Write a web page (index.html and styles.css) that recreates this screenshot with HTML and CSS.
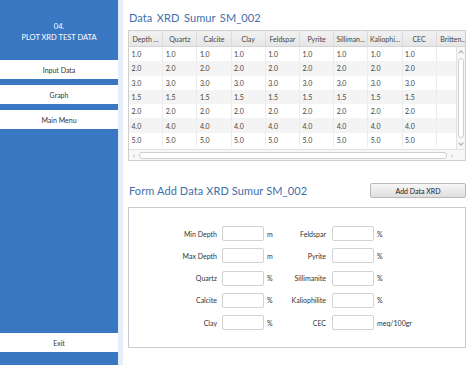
FILE: index.html
```html
<!DOCTYPE html>
<html>
<head>
<meta charset="utf-8">
<link rel="stylesheet" href="styles.css">
</head>
<body>
<div class="app">
  <aside class="sidebar">
    <div class="brand">
      <div>04.</div>
      <div>PLOT XRD TEST DATA</div>
    </div>
    <div class="navbtn">Input Data</div>
    <div class="navbtn">Graph</div>
    <div class="navbtn">Main Menu</div>
    <div class="spacer"></div>
    <div class="navbtn exit">Exit</div>
  </aside>
  <div class="strip"></div>
  <main class="main">
    <h1 class="title">Data XRD Sumur SM_002</h1>
    <div class="table">
      <div class="thead">
        <div class="th">Depth ...</div><div class="th">Quartz</div><div class="th">Calcite</div><div class="th">Clay</div><div class="th">Feldspar</div><div class="th">Pyrite</div><div class="th">Silliman...</div><div class="th">Kaliophi...</div><div class="th">CEC</div><div class="th">Britten...</div>
      </div>
      <div class="tbody">
        <div class="rows" id="rows"></div>
        <div class="vscroll"><span class="arr up"></span><span class="vthumb"></span><span class="arr down"></span></div>
      </div>
      <div class="hbar">
        <div class="hscroll"><span class="harr">&lsaquo;</span><span class="hthumb"></span><span class="harr">&rsaquo;</span></div>
        <div class="corner"></div>
      </div>
    </div>

    <div class="formhead">
      <h2 class="title">Form Add Data XRD Sumur SM_002</h2>
      <button class="addbtn">Add Data XRD</button>
    </div>
    <div class="panel">
      <div class="lbl">Min Depth</div><div class="inp"></div><div class="unit">m</div>
      <div class="lbl">Feldspar</div><div class="inp"></div><div class="unit">%</div>
      <div class="lbl">Max Depth</div><div class="inp"></div><div class="unit">m</div>
      <div class="lbl">Pyrite</div><div class="inp"></div><div class="unit">%</div>
      <div class="lbl">Quartz</div><div class="inp"></div><div class="unit">%</div>
      <div class="lbl">Sillimanite</div><div class="inp"></div><div class="unit">%</div>
      <div class="lbl">Calcite</div><div class="inp"></div><div class="unit">%</div>
      <div class="lbl">Kaliophilite</div><div class="inp"></div><div class="unit">%</div>
      <div class="lbl">Clay</div><div class="inp"></div><div class="unit">%</div>
      <div class="lbl">CEC</div><div class="inp"></div><div class="unit">meq/100gr</div>
    </div>
  </main>
</div>
<script src="app.js"></script>
</body>
</html>
```
FILE: app.js
```js
var vals = ["1.0","2.0","3.0","1.5","2.0","4.0","5.0"];
var rows = document.getElementById("rows");
vals.forEach(function (v, i) {
  var r = document.createElement("div");
  r.className = "tr" + (i % 2 ? " alt" : "");
  for (var c = 0; c < 10; c++) {
    var d = document.createElement("div");
    d.className = "td";
    d.textContent = c < 9 ? v : "";
    r.appendChild(d);
  }
  rows.appendChild(r);
});
```
FILE: styles.css
```css
* { box-sizing: border-box; }
body {
  margin: 0;
  font-family: Lato, "Open Sans", sans-serif;
  background: #fff;
  color: #333;
}
.app {
  display: flex;
  width: 474px;
  height: 365px;
  overflow: hidden;
}
.sidebar {
  width: 119px;
  background: #3a77c2;
  display: flex;
  flex-direction: column;
  padding-bottom: 13px;
}
.brand {
  height: 60px;
  display: flex;
  flex-direction: column;
  align-items: center;
  justify-content: center;
  color: #fff;
  font-size: 7.5px;
  line-height: 11px;
  padding-top: 3px;
}
.navbtn {
  height: 19px;
  background: #fff;
  color: #333;
  font-size: 7px;
  display: flex;
  align-items: center;
  justify-content: center;
  margin-bottom: 6px;
}
.spacer { flex: 1; }
.navbtn.exit { margin-bottom: 0; }
.strip {
  width: 5px;
  background: #e4edf8;
}
.main {
  flex: 1;
  padding: 0 8px 0 5px;
}
.title {
  margin: 0;
  font-weight: 400;
  font-size: 11px;
  color: #3d6fab;
  line-height: 16px;
  letter-spacing: 0.1px;
  white-space: pre;
}
.main > .title { padding-top: 10px; height: 30px; padding-left: 1px; word-spacing: 1.5px; }
.table {
  width: 338px;
  height: 131px;
  border: 1px solid #cfcfcf;
  display: flex;
  flex-direction: column;
  overflow: hidden;
}
.thead {
  display: flex;
  height: 16px;
  background: linear-gradient(#f2f2f2, #e6e6e6);
  border-bottom: 1px solid #d4d4d4;
  flex: none;
}
.th {
  flex: none;
  width: 34.2px;
  font-size: 7px;
  color: #444;
  display: flex;
  align-items: center;
  justify-content: center;
  border-right: 1px solid #dcdcdc;
  white-space: nowrap;
  overflow: hidden;
}
.tbody {
  flex: 1;
  display: flex;
  min-height: 0;
}
.rows { flex: 1; overflow: hidden; }
.tr { display: flex; height: 14.3px; background: #fff; overflow: hidden; }
.tr.alt { background: #f4f4f4; }
.td {
  flex: none;
  width: 34.2px;
  font-size: 7px;
  line-height: 8px;
  color: #444;
  padding-left: 2.5px;
  display: flex;
  align-items: center;
  border-right: 1px solid #ececec;
}
.vscroll {
  width: 9px;
  flex: none;
  background: #f7f7f7;
  border-left: 1px solid #e2e2e2;
  display: flex;
  flex-direction: column;
  align-items: center;
  padding: 2px 0;
}
.arr {
  width: 4px; height: 4px;
  border-left: 1px solid #aaa;
  border-top: 1px solid #aaa;
  flex: none;
}
.arr.up { transform: rotate(45deg); margin-top: 2px; }
.arr.down { transform: rotate(225deg); margin-bottom: 2px; }
.vthumb {
  flex: 1;
  width: 6px;
  margin: 3px 0;
  border: 1px solid #d0d0d0;
  border-radius: 3px;
  background: #fff;
}
.hbar { height: 11px; display: flex; flex: none; border-top: 1px solid #e2e2e2; }
.hscroll {
  flex: 1;
  display: flex;
  align-items: center;
  background: #f7f7f7;
  padding: 0 2px;
}
.harr { font-size: 8px; color: #999; width: 6px; text-align: center; line-height: 8px; }
.hthumb {
  flex: none;
  width: 308px;
  height: 7px;
  border: 1px solid #d0d0d0;
  border-radius: 3px;
  background: #fff;
  margin: 0 2px;
}
.hthumb + .harr { margin-left: auto; }
.corner { width: 9px; background: #f7f7f7; }
.formhead {
  display: flex;
  justify-content: space-between;
  align-items: center;
  margin-top: 21px;
  height: 17px;
  width: 338px;
  padding-left: 1px;
}
.addbtn {
  width: 96px;
  height: 15px;
  margin: 0;
  padding: 0;
  border: 1px solid #b9b9b9;
  border-radius: 2px;
  background: linear-gradient(#f7f7f7, #dedede);
  font-family: Lato, sans-serif;
  font-size: 7px;
  color: #222;
}
.panel {
  margin-top: 8px;
  width: 338px;
  height: 141px;
  border: 1px solid #c6ccd4;
  display: grid;
  grid-template-columns: 93px 45px 22px 43px 45px auto;
  grid-auto-rows: 15px;
  row-gap: 7.3px;
  padding-top: 18px;
  align-content: start;
}
.lbl {
  font-size: 7px;
  color: #333;
  text-align: right;
  padding-right: 5px;
  display: flex;
  align-items: center;
  justify-content: flex-end;
}
.panel .lbl:nth-child(6n+4) { padding-right: 6px; }
.inp {
  width: 42px;
  height: 15px;
  border: 1px solid #d2d2d2;
  border-radius: 2px;
  background: #fff;
}
.unit {
  font-size: 7px;
  color: #333;
  display: flex;
  align-items: center;
}
```
